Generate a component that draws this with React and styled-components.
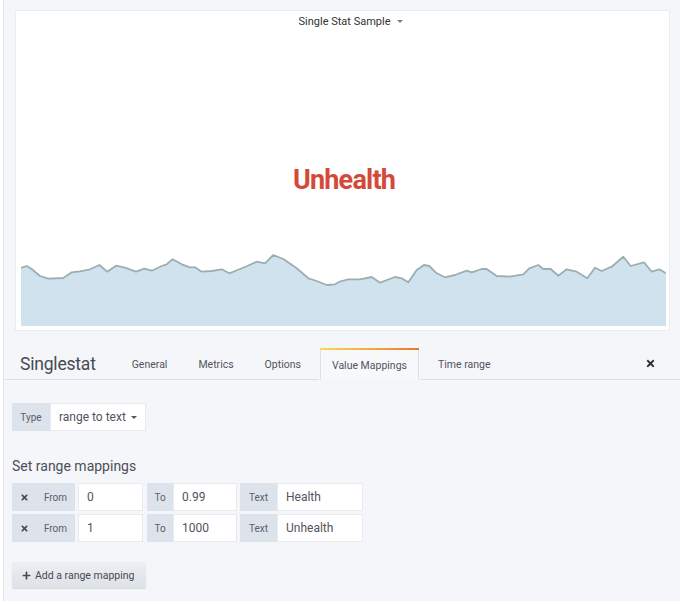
import React from "react";
import styled, { createGlobalStyle } from "styled-components";
import { FaTimes, FaPlus } from "react-icons/fa";

const GlobalStyle = createGlobalStyle`
  html, body { margin: 0; padding: 0; background: #ffffff; }
  body { font-family: Roboto, "Noto Sans", "Liberation Sans", sans-serif; color: #52545c; }
  * { box-sizing: border-box; }
`;

const Shell = styled.div`
  margin-left: 3px;
  width: 677px;
  height: 601px;
  border-left: 1px solid #e1e4e8;
  background: #f5f6f9;
  display: flex;
  flex-direction: column;
`;

const PanelArea = styled.div`
  padding: 10px 10px 0 11px;
`;

const Panel = styled.div`
  height: 321px;
  background: #ffffff;
  border: 1px solid #e9ecf0;
  display: flex;
  flex-direction: column;
`;

const PanelTitle = styled.div`
  height: 20px;
  display: flex;
  align-items: center;
  justify-content: center;
  gap: 7px;
  font-size: 11px;
  color: #333333;
  padding-left: 17px;
`;

const Caret = styled.span`
  display: inline-block;
  width: 0;
  height: 0;
  border-left: ${(p) => p.$size}px solid transparent;
  border-right: ${(p) => p.$size}px solid transparent;
  border-top: ${(p) => p.$size}px solid ${(p) => p.$color || "#7b7f86"};
  margin-left: ${(p) => p.$gap || 0}px;
`;

const BigValue = styled.div`
  margin-top: 134px;
  height: 30px;
  line-height: 30px;
  text-align: center;
  font-weight: 700;
  font-size: 27px;
  letter-spacing: -0.8px;
  color: #d44a3a;
  padding-left: 3px;
`;

const Spark = styled.svg`
  display: block;
  margin: 55px 0 0 5px;
  width: 645px;
  height: 76px;
`;

const Header = styled.div`
  height: 49px;
  display: flex;
  align-items: flex-end;
  padding-left: 16px;
  border-bottom: 1px solid #dde1e6;
`;

const EditorTitle = styled.div`
  height: 31px;
  display: flex;
  align-items: center;
  font-size: 17.5px;
  color: #464a52;
  margin-right: 23px;
  letter-spacing: -0.2px;
`;

const TabList = styled.div`
  display: flex;
  gap: 5px;
  align-items: flex-end;
`;

const Tab = styled.div`
  height: ${(p) => (p.$active ? 32 : 31)}px;
  padding: 0 12px;
  display: flex;
  align-items: center;
  font-size: 10.5px;
  color: #52545c;
  margin-bottom: ${(p) => (p.$active ? -1 : 0)}px;
  background: ${(p) => (p.$active ? "#f7f8fa" : "transparent")};
  border-left: 1px solid ${(p) => (p.$active ? "#dde1e6" : "transparent")};
  border-right: 1px solid ${(p) => (p.$active ? "#dde1e6" : "transparent")};
  border-top: 2px solid transparent;
  border-image: ${(p) =>
    p.$active
      ? "linear-gradient(90deg, #fbd55b, #f2a33b 60%, #e8772c) 1"
      : "none"};
  border-image-slice: ${(p) => (p.$active ? "2 0 0 0" : "initial")};
  box-shadow: ${(p) => (p.$active ? "inset 1px 0 0 #dde1e6, inset -1px 0 0 #dde1e6" : "none")};
`;

const Close = styled.div`
  margin-left: auto;
  margin-right: 24px;
  height: 31px;
  display: flex;
  align-items: center;
  color: #2f3238;
`;

const Content = styled.div`
  padding: 23px 8px 0 8px;
  display: flex;
  flex-direction: column;
  align-items: flex-start;
`;

const Field = styled.div`
  display: flex;
  height: 28px;
`;

const Label = styled.div`
  width: ${(p) => p.$w}px;
  height: 28px;
  background: #dde3ea;
  display: flex;
  align-items: center;
  justify-content: ${(p) => p.$justify || "center"};
  font-size: 10px;
  color: #5b6069;
  margin-left: ${(p) => p.$ml || 0}px;
`;

const Input = styled.div`
  width: ${(p) => p.$w}px;
  height: 28px;
  background: #ffffff;
  border: 1px solid #e7eaee;
  display: flex;
  align-items: center;
  padding-left: ${(p) => p.$pl || 8}px;
  font-size: 12px;
  color: #52545c;
  margin-left: ${(p) => p.$ml || 0}px;
`;

const SelectBox = styled(Input)`
  justify-content: space-between;
  padding-right: 8px;
`;

const Heading = styled.div`
  margin-top: 25px;
  height: 20px;
  line-height: 20px;
  font-size: 14px;
  color: #4b4f57;
  margin-bottom: 7px;
`;

const Rows = styled.div`
  display: flex;
  flex-direction: column;
  gap: 3px;
`;

const RemoveBtn = styled.div`
  width: 24px;
  height: 28px;
  background: #dde3ea;
  display: flex;
  align-items: center;
  justify-content: center;
  color: #4a4e55;
  padding-left: 1px;
`;

const AddButton = styled.div`
  margin-top: 20px;
  width: 134px;
  height: 26px;
  display: flex;
  align-items: center;
  gap: 4px;
  padding-left: 10px;
  font-size: 10.5px;
  color: #464a52;
  background: linear-gradient(to bottom, #eceff3, #dde2e9);
  box-shadow: 0 1px 1px rgba(0, 0, 0, 0.12);
  border-radius: 2px;
`;

const points = [
  [21, 268], [26.7, 266], [31.7, 269], [40, 276], [48.3, 278.7], [63.3, 278],
  [71.7, 272.3], [80, 271.3], [90, 269.3], [99.3, 265], [107.3, 271.7], [116, 265.7],
  [125, 267.7], [136, 271.7], [144.3, 268.7], [151.7, 270.7], [161.7, 266], [166.7, 264.3],
  [172.7, 259.3], [181.7, 264.3], [190, 267.3], [195, 267.3], [201.7, 271.7], [211.7, 271],
  [221.7, 269.3], [229.3, 273.3], [240, 269], [247.3, 266], [256.7, 261.7], [265, 263.3],
  [273.3, 255], [283.3, 259], [296.7, 268.3], [308.3, 278.3], [316.7, 281], [326.7, 285],
  [335, 284.3], [340, 281.5], [348.3, 279.3], [360, 279.3], [371.7, 277], [380, 282.7],
  [395, 277], [401.7, 278.3], [408.3, 282.3], [416.7, 270], [424, 265], [429.3, 266],
  [436.7, 273.3], [445, 277.3], [455, 275], [466.7, 270.7], [471.7, 272.3], [481.7, 269],
  [486.7, 269], [496.7, 276], [510, 276.7], [523.3, 274.3], [529.3, 268.3], [538.3, 265],
  [543.3, 269], [550.7, 269], [558.3, 275.7], [566.7, 269.3], [576.7, 271.7], [587.3, 278.3],
  [595, 267.7], [601.7, 271], [611.7, 266.7], [623.3, 256.7], [630.7, 266], [644, 262.3],
  [651.7, 271.7], [659.3, 269.3], [666, 273.3],
];

const linePath = points.map((p, i) => `${i ? "L" : "M"}${p[0]} ${p[1]}`).join(" ");
const areaPath = `${linePath} L666 326 L21 326 Z`;

const Sparkline = () => (
  <Spark viewBox="21 250 645 76" preserveAspectRatio="none">
    <path d={areaPath} fill="#d0e2ee" />
    <path d={linePath} fill="none" stroke="#9bafb0" strokeWidth="1.8" strokeLinejoin="round" />
  </Spark>
);

const tabs = ["General", "Metrics", "Options", "Value Mappings", "Time range"];

const mappings = [
  { from: "0", to: "0.99", text: "Health" },
  { from: "1", to: "1000", text: "Unhealth" },
];

export default function App() {
  return (
    <>
      <GlobalStyle />
      <Shell>
        <PanelArea>
          <Panel>
            <PanelTitle>
              Single Stat Sample
              <Caret $size={3} />
            </PanelTitle>
            <BigValue>Unhealth</BigValue>
            <Sparkline />
          </Panel>
        </PanelArea>
        <Header>
          <EditorTitle>Singlestat</EditorTitle>
          <TabList>
            {tabs.map((t) => (
              <Tab key={t} $active={t === "Value Mappings"}>
                {t}
              </Tab>
            ))}
          </TabList>
          <Close>
            <FaTimes size={11} />
          </Close>
        </Header>
        <Content>
          <Field>
            <Label $w={38}>Type</Label>
            <SelectBox $w={96}>
              range to text
              <Caret $size={3} $color="#52545c" />
            </SelectBox>
          </Field>
          <Heading>Set range mappings</Heading>
          <Rows>
            {mappings.map((m, i) => (
              <Field key={i}>
                <RemoveBtn>
                  <FaTimes size={9} />
                </RemoveBtn>
                <Label $w={39}>From</Label>
                <Input $w={65} $ml={3}>{m.from}</Input>
                <Label $w={26} $ml={4}>To</Label>
                <Input $w={64}>{m.to}</Input>
                <Label $w={37} $ml={3}>Text</Label>
                <Input $w={86}>{m.text}</Input>
              </Field>
            ))}
          </Rows>
          <AddButton>
            <FaPlus size={9} />
            Add a range mapping
          </AddButton>
        </Content>
      </Shell>
    </>
  );
}
